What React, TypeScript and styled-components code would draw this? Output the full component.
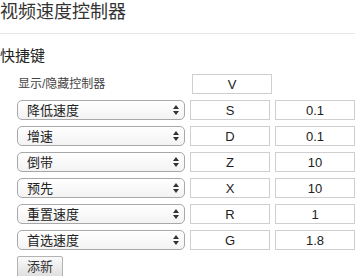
import React from 'react'
import styled, { createGlobalStyle } from 'styled-components'

const GlobalStyle = createGlobalStyle`
  html, body {
    margin: 0;
    padding: 0;
    background: #fff;
  }
  body {
    font-family: "Liberation Sans", "Noto Sans CJK SC", sans-serif;
    color: #333;
  }
`

const Page = styled.div`
  width: 355px;
  height: 276px;
  overflow: hidden;
`

const Title = styled.h1`
  margin: 0;
  font-size: 18px;
  line-height: 24px;
  font-weight: normal;
  padding-bottom: 9px;
  border-bottom: 1px solid #e6e6e6;
`

const Section = styled.h2`
  margin: 12px 0 8px;
  font-size: 15px;
  line-height: 20px;
  font-weight: normal;
  color: #222;
`

const List = styled.div`
  display: flex;
  flex-direction: column;
  gap: 6px;
  padding-left: 17px;
`

const Row = styled.div`
  display: flex;
  align-items: center;
  height: 20px;
  gap: 5px;
`

const Label = styled.div`
  width: 169px;
  padding-left: 1px;
  font-size: 12px;
  line-height: 20px;
  color: #444;
`

const SelectWrap = styled.div`
  position: relative;
  width: 169px;
  height: 20px;
`

const Select = styled.select`
  appearance: none;
  -webkit-appearance: none;
  box-sizing: border-box;
  width: 100%;
  height: 20px;
  margin: 0;
  padding: 0 18px 0 9px;
  border: 1px solid #a8a8a8;
  border-radius: 5px;
  background: linear-gradient(#ffffff, #f3f3f3);
  font-family: inherit;
  font-size: 13px;
  color: #222;
  outline: none;
`

const Arrows = styled.svg`
  position: absolute;
  right: 6px;
  top: 5px;
  pointer-events: none;
`

const Field = styled.input<{ $width?: number }>`
  box-sizing: border-box;
  width: ${(p) => p.$width ?? 80}px;
  height: 20px;
  margin: 0;
  padding: 0;
  border: 1px solid #cfcfcf;
  background: #fff;
  text-align: center;
  font-family: inherit;
  font-size: 13px;
  color: #222;
  outline: none;
  flex-shrink: 0;
`

const Actions = styled.div`
  display: flex;
`

const AddButton = styled.button`
  width: 46px;
  height: 22px;
  padding: 0;
  border: 1px solid #b3b3b3;
  border-radius: 2px;
  background: linear-gradient(#fafafa, #dedede);
  font-family: inherit;
  font-size: 13px;
  line-height: 20px;
  color: #333;
`

const shortcuts = [
  { action: '降低速度', key: 'S', value: '0.1' },
  { action: '增速', key: 'D', value: '0.1' },
  { action: '倒带', key: 'Z', value: '10' },
  { action: '预先', key: 'X', value: '10' },
  { action: '重置速度', key: 'R', value: '1' },
  { action: '首选速度', key: 'G', value: '1.8' },
]

const ArrowIcon = () => (
  <Arrows width="6" height="10" viewBox="0 0 6 10">
    <path d="M3 0 L6 4 L0 4 Z" fill="#333" />
    <path d="M0 6 L6 6 L3 10 Z" fill="#333" />
  </Arrows>
)

export default function App() {
  return (
    <Page>
      <GlobalStyle />
      <Title>视频速度控制器</Title>
      <Section>快捷键</Section>
      <List>
        <Row>
          <Label>显示/隐藏控制器</Label>
          <Field defaultValue="V" readOnly />
        </Row>
        {shortcuts.map((s) => (
          <Row key={s.key}>
            <SelectWrap>
              <Select defaultValue={s.action}>
                <option>{s.action}</option>
              </Select>
              <ArrowIcon />
            </SelectWrap>
            <Field defaultValue={s.key} readOnly />
            <Field defaultValue={s.value} />
          </Row>
        ))}
        <Actions>
          <AddButton>添新</AddButton>
        </Actions>
      </List>
    </Page>
  )
}
